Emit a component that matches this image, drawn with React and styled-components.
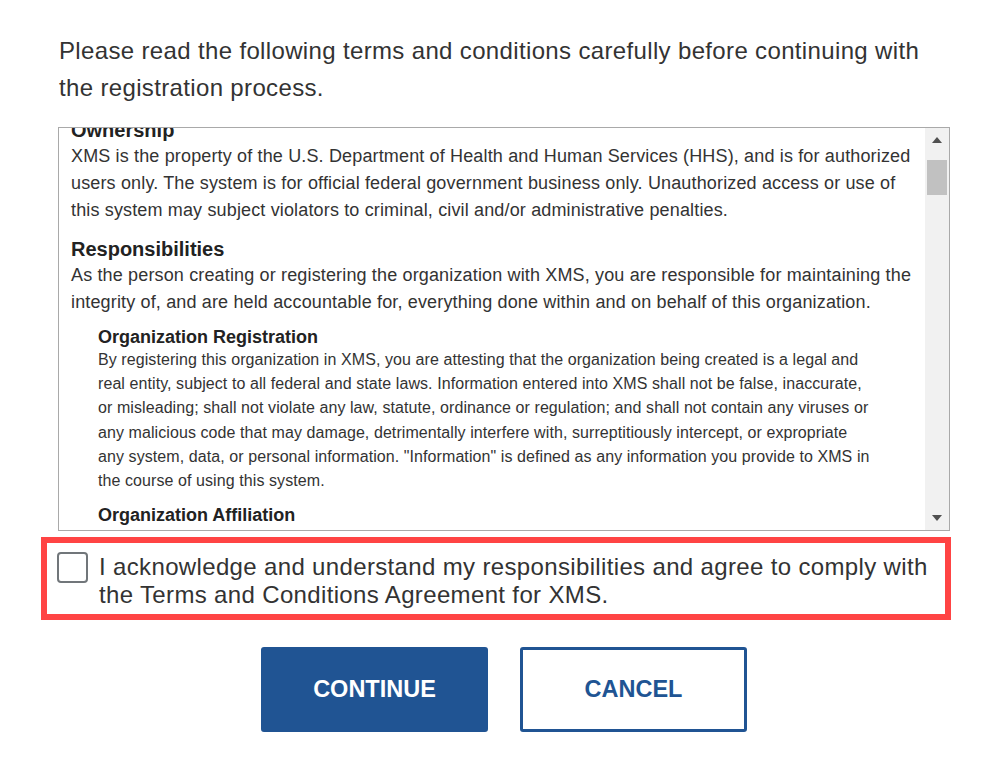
import React, { useLayoutEffect, useRef } from "react";
import styled, { createGlobalStyle } from "styled-components";

const GlobalStyle = createGlobalStyle`
  html, body {
    margin: 0;
    padding: 0;
    background: #ffffff;
  }
  body {
    font-family: "Liberation Sans", Arial, sans-serif;
    color: #333333;
  }
  * {
    box-sizing: border-box;
  }
`;

const Page = styled.div`
  width: 1008px;
  padding: 32px 58px 0 58px;
`;

const Intro = styled.p`
  margin: 0 0 21px 1px;
  font-size: 24px;
  letter-spacing: 0.35px;
  line-height: 37px;
  color: #333333;
`;

const ScrollBox = styled.div`
  display: flex;
  height: 404px;
  border: 1px solid #a9a9a9;
`;

const Viewport = styled.div`
  position: relative;
  flex: 1;
  overflow: hidden;
  padding: 0 12px 12px;
`;

const SectionTitle = styled.h3`
  margin: ${(p) => (p.$first ? "0" : "12px")} 0 0;
  font-size: 20px;
  line-height: 26px;
  font-weight: 700;
  color: #222222;
`;

const Para = styled.p`
  margin: 0;
  font-size: 18px;
  letter-spacing: 0.15px;
  line-height: 27px;
  color: #333333;
`;

const SubSection = styled.div`
  margin: ${(p) => (p.$first ? "10px" : "11px")} 39px 0 27px;
`;

const SubTitle = styled.h4`
  margin: 0;
  font-size: 18px;
  line-height: 22px;
  font-weight: 700;
  color: #222222;
`;

const SubPara = styled.p`
  margin: 0;
  font-size: 16px;
  letter-spacing: 0.08px;
  line-height: 24.2px;
  color: #333333;
`;

const Scrollbar = styled.div`
  width: 24px;
  flex-shrink: 0;
  display: flex;
  flex-direction: column;
  background: #f1f1f1;
`;

const ScrollButton = styled.div`
  height: 24px;
  display: flex;
  align-items: center;
  justify-content: center;
  &::after {
    content: "";
    width: 0;
    height: 0;
    border-left: 5px solid transparent;
    border-right: 5px solid transparent;
    ${(p) =>
      p.$down
        ? "border-top: 6px solid #505050;"
        : "border-bottom: 6px solid #505050;"}
  }
`;

const Track = styled.div`
  flex: 1;
  display: flex;
  flex-direction: column;
  align-items: center;
`;

const Thumb = styled.div`
  width: 20px;
  height: 35px;
  margin-top: 8px;
  background: #c1c1c1;
`;

const AckBox = styled.div`
  display: flex;
  align-items: flex-start;
  gap: 11px;
  margin: 6px -1px 0 -17px;
  border: 6px solid #ff4444;
  padding: 10px 10px 5px 10px;
`;

const CheckBox = styled.span`
  flex-shrink: 0;
  width: 31px;
  height: 31px;
  margin-top: -1px;
  border: 2px solid #71767a;
  border-radius: 4px;
  background: #ffffff;
  cursor: pointer;
`;

const AckLabel = styled.label`
  font-size: 24px;
  letter-spacing: 0.35px;
  line-height: 28px;
  color: #333333;
  cursor: pointer;
`;

const Actions = styled.div`
  display: flex;
  justify-content: center;
  gap: 32px;
  margin-top: 27px;
`;

const Button = styled.button`
  width: 227px;
  height: 85px;
  border-radius: 3px;
  border: 3px solid #205493;
  background: ${(p) => (p.$outline ? "#ffffff" : "#205493")};
  color: ${(p) => (p.$outline ? "#205493" : "#ffffff")};
  font-family: "Liberation Sans", Arial, sans-serif;
  font-size: 23.5px;
  font-weight: 700;
  text-transform: uppercase;
  cursor: pointer;
`;

export default function App() {
  const viewRef = useRef(null);
  const ownRef = useRef(null);

  useLayoutEffect(() => {
    if (viewRef.current && ownRef.current) {
      viewRef.current.scrollTop = ownRef.current.offsetTop + 11;
    }
  }, []);

  return (
    <Page>
      <GlobalStyle />
      <Intro>
        Please read the following terms and conditions carefully before continuing with
        the registration process.
      </Intro>

      <ScrollBox>
        <Viewport ref={viewRef}>
          <SectionTitle $first>Terms and Conditions Agreement</SectionTitle>
          <Para>
            These terms and conditions govern the use of XMS. Please review each section
            below before you register an organization.
          </Para>
          <SectionTitle ref={ownRef}>Ownership</SectionTitle>
          <Para>
            XMS is the property of the U.S. Department of Health and Human Services (HHS), and is for authorized
            users only. The system is for official federal government business only. Unauthorized access or use of
            this system may subject violators to criminal, civil and/or administrative penalties.
          </Para>

          <SectionTitle>Responsibilities</SectionTitle>
          <Para>
            As the person creating or registering the organization with XMS, you are responsible for maintaining the
            integrity of, and are held accountable for, everything done within and on behalf of this organization.
          </Para>

          <SubSection $first>
            <SubTitle>Organization Registration</SubTitle>
            <SubPara>
              By registering this organization in XMS, you are attesting that the organization being created is a legal and
              real entity, subject to all federal and state laws. Information entered into XMS shall not be false, inaccurate,
              or misleading; shall not violate any law, statute, ordinance or regulation; and shall not contain any viruses or
              any malicious code that may damage, detrimentally interfere with, surreptitiously intercept, or expropriate
              any system, data, or personal information. "Information" is defined as any information you provide to XMS in
              the course of using this system.
            </SubPara>
          </SubSection>

          <SubSection>
            <SubTitle>Organization Affiliation</SubTitle>
            <SubPara>
              You are responsible for managing the users affiliated with this organization and for removing
              access for anyone who no longer requires it.
            </SubPara>
          </SubSection>
        </Viewport>
        <Scrollbar>
          <ScrollButton />
          <Track>
            <Thumb />
          </Track>
          <ScrollButton $down />
        </Scrollbar>
      </ScrollBox>

      <AckBox>
        <CheckBox role="checkbox" aria-checked="false" />
        <AckLabel>
          I acknowledge and understand my responsibilities and agree to comply with
          the Terms and Conditions Agreement for XMS.
        </AckLabel>
      </AckBox>

      <Actions>
        <Button>Continue</Button>
        <Button $outline>Cancel</Button>
      </Actions>
    </Page>
  );
}
